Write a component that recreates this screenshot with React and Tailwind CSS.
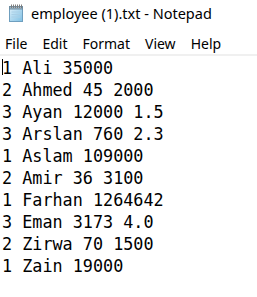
import React from 'react';

// Fichier texte affiché dans le bloc-notes
const lines = [
  '1 Ali 35000',
  '2 Ahmed 45 2000',
  '3 Ayan 12000 1.5',
  '3 Arslan 760 2.3',
  '1 Aslam 109000',
  '2 Amir 36 3100',
  '1 Farhan 1264642',
  '3 Eman 3173 4.0',
  '2 Zirwa 70 1500',
  '1 Zain 19000',
];

const menus = ['File', 'Edit', 'Format', 'View', 'Help'];

const NotepadIcon = () => (
  <svg width="18" height="18" viewBox="0 0 18 18">
    <defs>
      <linearGradient id="pad" x1="0" y1="0" x2="1" y2="1">
        <stop offset="0" stopColor="#dff1fb" />
        <stop offset="1" stopColor="#7fc0e4" />
      </linearGradient>
    </defs>
    <rect x="2.5" y="2.5" width="13" height="15" fill="url(#pad)" stroke="#6f9fbf" />
    <rect x="2.5" y="2.5" width="13" height="2.5" fill="#9fb5c4" stroke="#6f8ea3" />
    {[4, 6, 8, 10, 12, 14].map((x) => (
      <rect key={x} x={x} y="0.5" width="1" height="3.5" fill="#7d7d7d" />
    ))}
    {[8, 10.5, 13].map((y) => (
      <line key={y} x1="4.5" y1={y} x2="13.5" y2={y} stroke="#a9cfe6" strokeWidth="1" />
    ))}
  </svg>
);

export default function App() {
  return (
    <div className="w-[257px] h-[297px] bg-white overflow-hidden flex flex-col">
      {/* Barre de titre */}
      <div className="h-[26px] flex items-center pl-[7px] gap-[6px]">
        <NotepadIcon />
        <span className="text-[14.5px] text-black leading-none" style={{ fontFamily: '"Noto Sans", sans-serif' }}>
          employee (1).txt - Notepad
        </span>
      </div>

      {/* Menu */}
      <div
        className="h-[30px] flex items-center pl-[5px] pt-[6px] gap-[15px] text-[14px] text-black border-b-2 border-[#f0f0f0]"
        style={{ fontFamily: '"Noto Sans", sans-serif' }}
      >
        {menus.map((m) => (
          <span key={m}>{m}</span>
        ))}
      </div>

      {/* Zone de texte */}
      <div className="relative flex-1 pt-[1px] pl-[2px]">
        <div className="absolute left-[2px] top-[3px] w-[1px] h-[16px] bg-black" />
        {lines.map((l, i) => (
          <div
            key={i}
            className="h-[22px] leading-[22px] text-[16.8px] text-black whitespace-pre"
            style={{ fontFamily: '"DejaVu Sans Mono", monospace' }}
          >
            {l}
          </div>
        ))}
      </div>
    </div>
  );
}
